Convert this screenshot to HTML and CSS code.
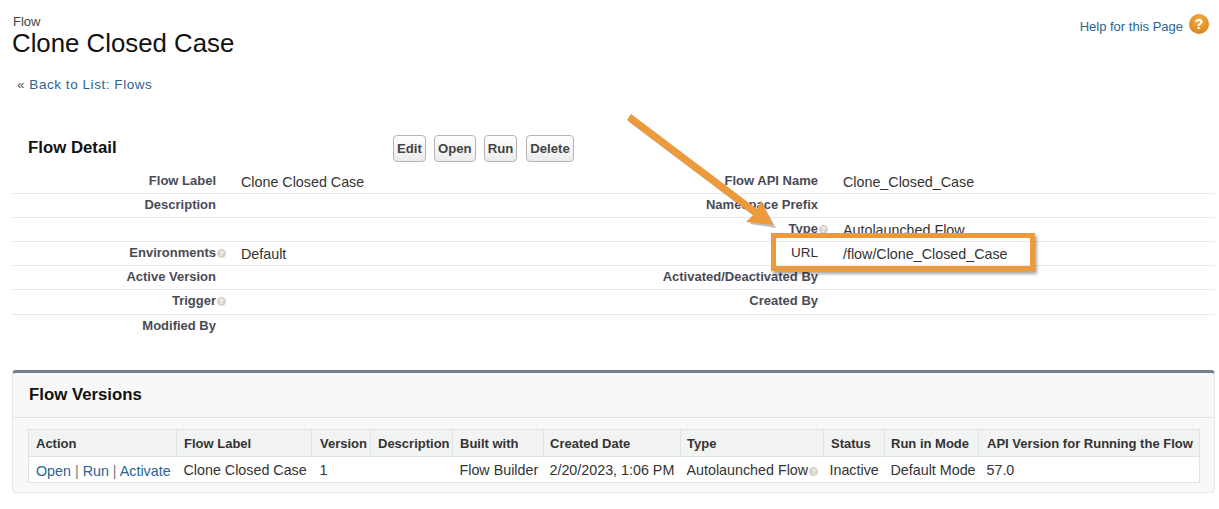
FILE: index.html
```html
<!DOCTYPE html>
<html lang="en">
<head>
    <meta charset="UTF-8">
    <title>Flow: Clone Closed Case</title>
    <link rel="stylesheet" href="styles.css">
</head>
<body>
    <div class="page-header">
        <div>
            <div class="page-type">Flow</div>
            <h1>Clone Closed Case</h1>
        </div>
        <div class="help">
            <a href="#">Help for this Page</a>
            <span class="help-icon">?</span>
        </div>
    </div>

    <div class="back">« <a href="#">Back to List: Flows</a></div>

    <div class="detail">
        <div class="detail-head">
            <h2>Flow Detail</h2>
            <div class="buttons">
                <button>Edit</button>
                <button>Open</button>
                <button>Run</button>
                <button class="delete">Delete</button>
            </div>
        </div>
        <div class="row">
            <div class="label">Flow Label</div><div class="value">Clone Closed Case</div>
            <div class="label">Flow API Name</div><div class="value">Clone_Closed_Case</div>
        </div>
        <div class="row">
            <div class="label">Description</div><div class="value"></div>
            <div class="label">Namespace Prefix</div><div class="value"></div>
        </div>
        <div class="row">
            <div class="label"></div><div class="value"></div>
            <div class="label">Type<i class="info">?</i></div><div class="value">Autolaunched Flow</div>
        </div>
        <div class="row">
            <div class="label">Environments<i class="info">?</i></div><div class="value">Default</div>
            <div class="label plain">URL</div><div class="value">/flow/Clone_Closed_Case</div>
        </div>
        <div class="row">
            <div class="label">Active Version</div><div class="value"></div>
            <div class="label">Activated/Deactivated By</div><div class="value"></div>
        </div>
        <div class="row">
            <div class="label">Trigger<i class="info">?</i></div><div class="value"></div>
            <div class="label">Created By</div><div class="value"></div>
        </div>
        <div class="row last">
            <div class="label">Modified By</div><div class="value"></div>
            <div class="label"></div><div class="value"></div>
        </div>
    </div>

    <div class="versions">
        <div class="versions-head">Flow Versions</div>
        <div class="versions-body">
            <table>
                <tr>
                    <th class="c-action">Action</th>
                    <th class="c-label">Flow Label</th>
                    <th class="c-version">Version</th>
                    <th class="c-desc">Description</th>
                    <th class="c-built">Built with</th>
                    <th class="c-date tight">Created Date</th>
                    <th class="c-type tight">Type</th>
                    <th class="c-status">Status</th>
                    <th class="c-mode tight">Run in Mode</th>
                    <th class="c-api">API Version for Running the Flow</th>
                </tr>
                <tr>
                    <td class="actions"><a href="#">Open</a> | <a href="#">Run</a> | <a href="#">Activate</a></td>
                    <td>Clone Closed Case</td>
                    <td class="version-value">1</td>
                    <td></td>
                    <td>Flow Builder</td>
                    <td class="tight">2/20/2023, 1:06 PM</td>
                    <td class="tight">Autolaunched Flow<i class="info">?</i></td>
                    <td class="tight">Inactive</td>
                    <td class="tight">Default Mode</td>
                    <td class="api-value">57.0</td>
                </tr>
            </table>
        </div>
    </div>

    <!-- annotation drawn over the screenshot -->
    <div class="callout"></div>
    <svg class="arrow" width="170" height="125" viewBox="0 0 170 125">
        <path class="arrow-shadow" d="M5 6 L131 101 L126 108 L152 112 L139 88 L135 95 L9 0 Z"/>
        <path class="arrow-fill" d="M3 4 L129 99 L122 106 L149 109 L137 85 L133 93 L7 -2 Z"/>
    </svg>
</body>
</html>
```

FILE: styles.css
```css
body {
    margin: 0;
    font-family: "Liberation Sans", Arial, sans-serif;
    font-size: 14.3px;
    color: #333;
    background: #fff;
    position: relative;
    height: 509px;
    overflow: hidden;
}
a {
    color: #2a6496;
    text-decoration: none;
}
.page-header {
    display: flex;
    justify-content: space-between;
    padding: 15px 0 0 12px;
}
.page-type {
    font-size: 13px;
    line-height: 14px;
    padding-left: 1px;
    color: #444;
}
h1 {
    margin: 0;
    font-size: 25.8px;
    line-height: 29px;
    font-weight: normal;
    color: #111;
}
.help {
    display: flex;
    align-items: center;
    gap: 6px;
    height: 20px;
    margin-top: -1px;
    padding: 0 10px 0 0;
    font-size: 13px;
}
.help a {
    padding-top: 4px;
}
.help-icon {
    width: 20px;
    height: 20px;
    border-radius: 50%;
    background: radial-gradient(circle at 50% 35%, #f5b04a, #d07a10);
    color: #fff;
    font-size: 14px;
    font-weight: bold;
    line-height: 20px;
    text-align: center;
}
.back {
    margin: 19px 0 0 17px;
    font-size: 13.5px;
    letter-spacing: 0.55px;
    line-height: 16px;
    color: #555;
}
.detail {
    margin: 35.5px 4px 0 12px;
}
.detail-head {
    display: flex;
    align-items: center;
    height: 41px;
}
h2 {
    margin: 0;
    width: 381px;
    padding: 0 0 3px 16px;
    box-sizing: border-box;
    font-size: 16.8px;
    color: #111;
}
.buttons {
    display: flex;
    gap: 8px;
    margin-bottom: 1px;
}
button {
    height: 27px;
    padding: 0 3px;
    font-family: inherit;
    font-size: 13.2px;
    font-weight: bold;
    color: #444;
    border: 1px solid #b5b5b5;
    border-radius: 4px;
    background: linear-gradient(#fff, #ececec);
}
button.delete {
    margin-left: 1px;
}
.row {
    display: grid;
    grid-template-columns: 204px 357px 245px 1fr;
    height: 24.2px;
    box-sizing: border-box;
    border-bottom: 1px solid #e6e8ea;
    line-height: 24px;
}
.row.last {
    border-bottom: none;
}
.label {
    text-align: right;
    font-weight: bold;
    font-size: 13px;
    line-height: 22.5px;
    color: #4a4a56;
    position: relative;
}
.label.plain {
    font-weight: normal;
    font-size: 13.5px;
    color: #333;
}
.value {
    padding-left: 25px;
    color: #333;
}
.info {
    display: inline-block;
    width: 9px;
    height: 9px;
    border-radius: 50%;
    background: #d8d2c8;
    margin-left: 1px;
    color: #fff;
    font-size: 7px;
    font-style: normal;
    font-weight: bold;
    line-height: 9px;
    text-align: center;
    vertical-align: 1px;
}
.label .info {
    position: absolute;
    top: 7px;
}
.versions {
    margin: 31.5px 4px 0 12px;
    height: 123px;
    box-sizing: border-box;
    border: 1px solid #e8e8e8;
    border-top: 3px solid #747e8f;
    border-radius: 4px;
    background: #f8f8f8;
}
.versions-head {
    height: 45px;
    box-sizing: border-box;
    line-height: 43px;
    padding-left: 16px;
    font-size: 16.8px;
    font-weight: bold;
    color: #111;
    border-bottom: 1px solid #e3e3e3;
}
.versions-body {
    padding: 11px 0 0 15px;
}
table {
    width: 1171px;
    table-layout: fixed;
    border-collapse: collapse;
    border: 1px solid #e0e3e5;
    background: #fff;
}
th {
    height: 27px;
    box-sizing: border-box;
    padding: 0 0 0 7px;
    text-align: left;
    font-size: 13px;
    font-weight: bold;
    color: #333;
    background: #f2f3f3;
    border-right: 1px solid #e0e3e5;
    border-bottom: 1px solid #e0e3e5;
    white-space: nowrap;
}
th:last-child {
    border-right: none;
}
th.tight {
    padding-left: 6px;
}
th.c-api,
th.c-version {
    padding-left: 8px;
}
td {
    height: 26px;
    box-sizing: border-box;
    padding: 0 0 0 7px;
    white-space: nowrap;
}
td.tight {
    padding-left: 6px;
}
td.api-value,
td.version-value {
    padding-left: 8px;
}
.actions {
    padding: 2px 0 0 7px;
    color: #777;
}
.c-action { width: 148px; }
.c-label { width: 135px; }
.c-version { width: 59px; }
.c-desc { width: 82px; }
.c-built { width: 91px; }
.c-date { width: 137px; }
.c-type { width: 143px; }
.c-status { width: 61px; }
.c-mode { width: 94px; }
.c-api { width: 221px; }
.callout {
    position: absolute;
    left: 771px;
    top: 233px;
    width: 264px;
    height: 38px;
    box-sizing: border-box;
    border: 5px solid #ec9a3c;
    box-shadow: 2px 3px 3px rgba(0, 0, 0, 0.35);
}
.arrow {
    position: absolute;
    left: 624px;
    top: 116px;
    overflow: visible;
}
.arrow-fill {
    fill: #ec9a3c;
}
.arrow-shadow {
    fill: rgba(0, 0, 0, 0.25);
}
```
